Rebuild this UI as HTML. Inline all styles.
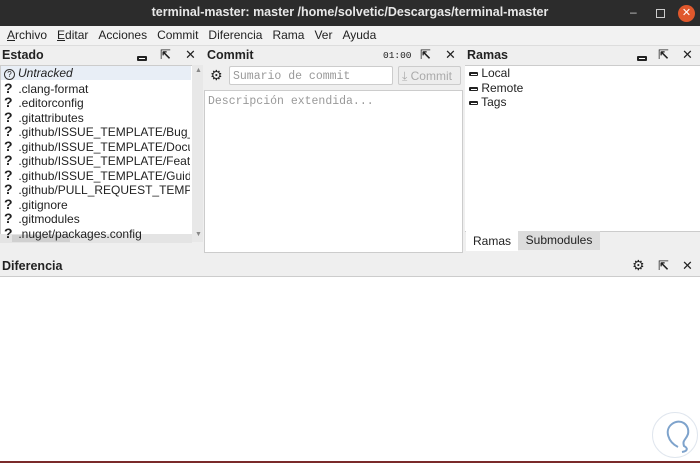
<!DOCTYPE html><html><head><style>
body{margin:0;width:700px;height:463px;background:#efefef;font-family:"Liberation Sans","DejaVu Sans",sans-serif;font-size:12px;color:#222;position:relative;overflow:hidden}
.a{position:absolute}
.hdr{font-weight:bold;font-size:12.5px}
.row{position:absolute;left:4px;height:15px;line-height:15px;white-space:nowrap}
.q{display:inline-block;width:11px;font-weight:bold;font-size:14px}
.ico{font-weight:bold;font-size:13px}
.dash{display:inline-block;width:10px;height:5px;background:#222;border-radius:1px;vertical-align:middle;position:relative}
.dash:after{content:"";position:absolute;left:2px;top:2px;width:6px;height:1px;background:#fff}
</style></head><body>
<div class="a" style="left:0;top:0;width:700px;height:26px;background:#2c2c2c"></div>
<div class="a" style="left:0;top:5px;width:700px;text-align:center;color:#e8e8e8;font-weight:bold;font-size:12.5px">terminal-master: master /home/solvetic/Descargas/terminal-master</div>
<div class="a" style="left:630px;top:5px;color:#ccc;font-size:12px">–</div>
<div class="a" style="left:656px;top:9px;width:7px;height:7px;border:1px solid #ccc"></div>
<div class="a" style="left:678px;top:5px;width:17px;height:17px;border-radius:50%;background:#e0582c;color:#fff;text-align:center;line-height:17px;font-size:11px">✕</div>
<div class="a" style="left:0;top:26px;width:700px;height:19px;background:#f2f2f2;border-bottom:1px solid #ddd"></div>
<div class="a" style="left:7px;top:28px;font-size:12px"><u>A</u>rchivo&nbsp;&nbsp;&nbsp;<u>E</u>ditar&nbsp;&nbsp;&nbsp;Acciones&nbsp;&nbsp;&nbsp;Commit&nbsp;&nbsp;&nbsp;Diferencia&nbsp;&nbsp;&nbsp;Rama&nbsp;&nbsp;&nbsp;Ver&nbsp;&nbsp;&nbsp;Ayuda</div>
<!-- Estado -->
<div class="a hdr" style="left:2px;top:48px">Estado</div>
<div class="a" style="left:137px;top:51px"><span class="dash"></span></div>
<div class="a ico" style="left:160px;top:47px">⇱</div>
<div class="a ico" style="left:185px;top:47px">✕</div>
<div class="a" style="left:0;top:65px;width:191px;height:168px;background:#fff;border:1px solid #ccc"></div>
<div class="a" style="left:1px;top:66px;width:190px;height:14px;background:#e8eef6"></div>
<div class="a" style="left:192px;top:65px;width:11px;height:177px;background:#e8e8e8"></div>
<div class="a" style="left:195px;top:67px;font-size:7px;color:#888">▲</div>
<div class="a" style="left:195px;top:231px;font-size:7px;color:#888">▼</div>
<div class="a" style="left:0;top:234px;width:192px;height:9px;background:#e4e4e4"></div>
<div class="a" style="left:12px;top:235px;width:58px;height:7px;background:#d0d0d0"></div>
<div class="row" style="top:66px"><span style="display:inline-block;width:9px;height:9px;border:1px solid #333;border-radius:50%;font-size:8px;line-height:9px;text-align:center;margin-right:3px">?</span><i>Untracked</i></div>
<div class="row" style="top:81px"><span class="q">?</span> .clang-format</div>
<div class="row" style="top:95px"><span class="q">?</span> .editorconfig</div>
<div class="row" style="top:110px"><span class="q">?</span> .gitattributes</div>
<div class="row" style="top:124px;width:186px;overflow:hidden"><span class="q">?</span> .github/ISSUE_TEMPLATE/Bug_Re</div>
<div class="row" style="top:139px;width:186px;overflow:hidden"><span class="q">?</span> .github/ISSUE_TEMPLATE/Docum</div>
<div class="row" style="top:153px;width:186px;overflow:hidden"><span class="q">?</span> .github/ISSUE_TEMPLATE/Feature</div>
<div class="row" style="top:168px;width:186px;overflow:hidden"><span class="q">?</span> .github/ISSUE_TEMPLATE/Guidan</div>
<div class="row" style="top:182px;width:186px;overflow:hidden"><span class="q">?</span> .github/PULL_REQUEST_TEMPLAT</div>
<div class="row" style="top:197px"><span class="q">?</span> .gitignore</div>
<div class="row" style="top:211px"><span class="q">?</span> .gitmodules</div>
<div class="row" style="top:226px"><span class="q">?</span> .nuget/packages.config</div>
<!-- Commit -->
<div class="a hdr" style="left:207px;top:48px">Commit</div>
<div class="a" style="left:383px;top:50px;font-family:'Liberation Mono',monospace;font-size:9.5px">01:00</div>
<div class="a ico" style="left:420px;top:47px">⇱</div>
<div class="a ico" style="left:445px;top:47px">✕</div>
<div class="a" style="left:210px;top:67px;font-size:14px">⚙</div>
<div class="a" style="left:229px;top:66px;width:164px;height:19px;background:#fff;border:1px solid #ccc;border-radius:2px;color:#999;font-family:'Liberation Mono',monospace;font-size:11.5px;line-height:19px;padding-left:3px;box-sizing:border-box">Sumario de commit</div>
<div class="a" style="left:398px;top:66px;width:63px;height:19px;background:#ededed;border:1px solid #ccc;border-radius:2px;color:#aaa;font-size:12px;line-height:19px;padding-left:3px;box-sizing:border-box">⤓ Commit</div>
<div class="a" style="left:204px;top:90px;width:257px;height:161px;background:#fff;border:1px solid #ccc"></div>
<div class="a" style="left:208px;top:95px;color:#999;font-family:'Liberation Mono',monospace;font-size:11.5px">Descripción extendida...</div>
<!-- Ramas -->
<div class="a hdr" style="left:467px;top:48px">Ramas</div>
<div class="a" style="left:637px;top:51px"><span class="dash"></span></div>
<div class="a ico" style="left:658px;top:47px">⇱</div>
<div class="a ico" style="left:682px;top:47px">✕</div>
<div class="a" style="left:465px;top:65px;width:235px;height:165px;background:#fff;border-top:1px solid #ccc;border-bottom:1px solid #ccc"></div>
<div class="row" style="left:469px;top:66px"><span class="dash" style="width:9px;height:4px"></span> Local</div>
<div class="row" style="left:469px;top:81px"><span class="dash" style="width:9px;height:4px"></span> Remote</div>
<div class="row" style="left:469px;top:95px"><span class="dash" style="width:9px;height:4px"></span> Tags</div>
<div class="a" style="left:466px;top:231px;width:52px;height:20px;background:#fff;text-align:center;line-height:20px">Ramas</div>
<div class="a" style="left:518px;top:231px;width:82px;height:19px;background:#dcdcdc;text-align:center;line-height:19px">Submodules</div>
<!-- Diferencia -->
<div class="a hdr" style="left:2px;top:259px">Diferencia</div>
<div class="a" style="left:632px;top:257px;font-size:14px">⚙</div>
<div class="a ico" style="left:658px;top:258px">⇱</div>
<div class="a ico" style="left:682px;top:258px">✕</div>
<div class="a" style="left:0;top:276px;width:700px;height:185px;background:#fff;border-top:1px solid #ccc"></div>
<div class="a" style="left:0;top:461px;width:700px;height:2px;background:#7a2a2a"></div>
<div class="a" style="left:652px;top:412px;width:44px;height:44px;border:1px solid #e0e6ee;border-radius:50%"></div>
<svg class="a" style="left:658px;top:412px" width="40" height="44"><path d="M20 35 C10 30 6 18 14 12 C22 6 32 12 30 22 C28 28 24 28 26 34 C30 36 30 39 24 40" fill="none" stroke="#7ea3cc" stroke-width="2"/></svg>
</body></html>
